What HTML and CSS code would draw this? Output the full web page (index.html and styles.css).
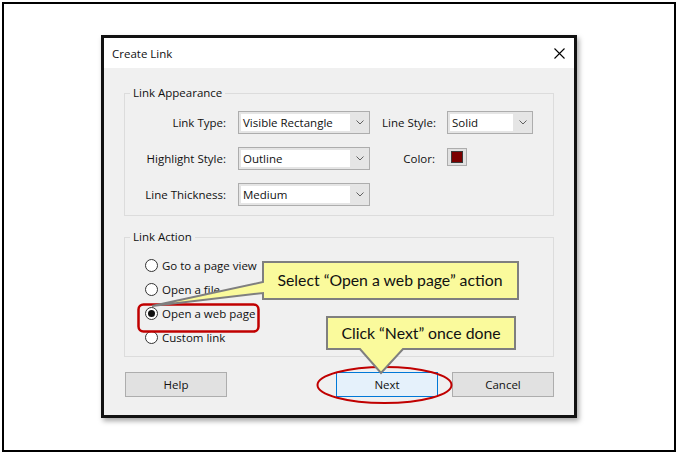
FILE: index.html
```html
<!DOCTYPE html>
<html lang="en">
<head>
    <meta charset="UTF-8">
    <title>Create Link</title>
    <link rel="stylesheet" href="styles.css">
</head>
<body>
    <div class="frame">
        <div class="dialog">
            <div class="titlebar">
                <span>Create Link</span>
                <svg class="close" width="11" height="11" viewBox="0 0 11 11">
                    <path d="M0.5 0.5 L10.5 10.5 M10.5 0.5 L0.5 10.5" stroke="#000" stroke-width="1.1" fill="none"/>
                </svg>
            </div>

            <div class="dialog-body">
                <fieldset class="group appearance">
                    <legend>Link Appearance</legend>
                    <div class="form-grid">
                        <label>Link Type:</label>
                        <div class="select">
                            <span class="value">Visible Rectangle</span>
                            <span class="arrow"><svg width="8" height="5" viewBox="0 0 8 5"><path d="M0.5 0.5 L4 4 L7.5 0.5" stroke="#606060" fill="none"/></svg></span>
                        </div>
                        <label>Line Style:</label>
                        <div class="select">
                            <span class="value">Solid</span>
                            <span class="arrow"><svg width="8" height="5" viewBox="0 0 8 5"><path d="M0.5 0.5 L4 4 L7.5 0.5" stroke="#606060" fill="none"/></svg></span>
                        </div>

                        <label>Highlight Style:</label>
                        <div class="select">
                            <span class="value">Outline</span>
                            <span class="arrow"><svg width="8" height="5" viewBox="0 0 8 5"><path d="M0.5 0.5 L4 4 L7.5 0.5" stroke="#606060" fill="none"/></svg></span>
                        </div>
                        <label>Color:</label>
                        <div class="swatch"><span></span></div>

                        <label>Line Thickness:</label>
                        <div class="select">
                            <span class="value">Medium</span>
                            <span class="arrow"><svg width="8" height="5" viewBox="0 0 8 5"><path d="M0.5 0.5 L4 4 L7.5 0.5" stroke="#606060" fill="none"/></svg></span>
                        </div>
                    </div>
                </fieldset>

                <fieldset class="group action">
                    <legend>Link Action</legend>
                    <div class="radio"><span class="dot"></span>Go to a page view</div>
                    <div class="radio"><span class="dot"></span>Open a file</div>
                    <div class="radio checked"><span class="dot"></span>Open a web page</div>
                    <div class="radio"><span class="dot"></span>Custom link</div>
                </fieldset>

                <div class="buttons">
                    <button class="btn">Help</button>
                    <span class="spacer"></span>
                    <button class="btn primary">Next</button>
                    <button class="btn">Cancel</button>
                </div>
            </div>
        </div>
    </div>

    <!-- annotation layer -->
    <svg class="notes" width="678" height="455" viewBox="0 0 678 455">
        <rect x="138.5" y="304.5" width="120" height="27" rx="5" fill="none" stroke="#c00000" stroke-width="2.5"/>
        <ellipse cx="384.5" cy="385" rx="67" ry="18" fill="none" stroke="#c00000" stroke-width="2"/>

        <path d="M263 262 H518 V299 H263 V293 L152 306 L263 282 Z" fill="#fafa9c" stroke="#7f7f7f" stroke-width="2"/>
        <text x="390" y="286" class="note-text">Select “Open a web page” action</text>

        <path d="M327 317 H515 V349 H403 L381 373 L360 349 H327 Z" fill="#fafa9c" stroke="#7f7f7f" stroke-width="2"/>
        <text x="421" y="339" class="note-text">Click “Next” once done</text>
    </svg>
</body>
</html>
```

FILE: styles.css
```css
* {
    margin: 0;
    padding: 0;
    box-sizing: border-box;
}

body {
    position: relative;
    width: 678px;
    height: 455px;
    background: white;
    font-family: 'Segoe UI', 'Open Sans', sans-serif;
    font-size: 11.5px;
    color: #111;
}

.frame {
    margin: 2px 0 0 2px;
    width: 674px;
    height: 450px;
    border: 2px solid #000;
    padding: 31px 0 0 97px;
}

.dialog {
    width: 476px;
    height: 383px;
    border: 3px solid #111;
    background: #f0f0f0;
    box-shadow: 2px 3px 5px rgba(0,0,0,0.35);
}

.titlebar {
    height: 30px;
    background: white;
    display: flex;
    align-items: center;
    justify-content: space-between;
    padding: 0 9px 0 8px;
}

.dialog-body {
    padding: 17px 20px 0 20px;
}

.group {
    border: 1px solid #dcdcdc;
    padding: 0;
}

.group legend {
    margin-left: 5px;
    padding: 0 3px;
    line-height: 16px;
}

.appearance {
    padding: 10px 0 9px 0;
}

.form-grid {
    display: grid;
    grid-template-columns: 101px 132px 53px 86px;
    grid-auto-rows: 23px;
    column-gap: 12px;
    row-gap: 13px;
    align-items: center;
}

.form-grid label {
    text-align: right;
    white-space: nowrap;
}

.select {
    display: flex;
    height: 23px;
    border: 1px solid #adadad;
    background: #e5e5e5;
}

.select .value {
    flex: 1;
    margin: 2px 0 2px 2px;
    padding-left: 2px;
    background: white;
    line-height: 17px;
}

.select .arrow {
    width: 19px;
    display: flex;
    align-items: center;
    justify-content: center;
}

.swatch {
    align-self: start;
    margin-top: 1px;
    width: 20px;
    height: 18px;
    border: 1px solid #adadad;
    background: #e1e1e1;
    padding: 2px 3px;
}

.swatch span {
    display: block;
    width: 12px;
    height: 12px;
    background: #7a0000;
    border: 1px solid #3a3a3a;
}

.action {
    margin-top: 13px;
    padding: 8px 0 7px 0;
}

.radio {
    height: 24px;
    display: flex;
    align-items: center;
    gap: 4px;
    padding-left: 20px;
}

.dot {
    width: 13px;
    height: 13px;
    border: 1px solid #333;
    border-radius: 50%;
    background: white;
    display: flex;
    align-items: center;
    justify-content: center;
}

.radio.checked .dot::after {
    content: "";
    width: 7px;
    height: 7px;
    border-radius: 50%;
    background: #111;
}

.buttons {
    display: flex;
    gap: 14px;
    margin-top: 15px;
    padding-left: 1px;
}

.spacer {
    flex: 1;
}

.btn {
    width: 102px;
    height: 25px;
    border: 1px solid #adadad;
    background: #e1e1e1;
    font-family: inherit;
    font-size: 11.5px;
    color: #111;
}

.btn.primary {
    background: #e5f1fb;
    border-color: #0078d7;
}

.notes {
    position: absolute;
    left: 0;
    top: 0;
}

.note-text {
    font-family: Lato, 'Open Sans', sans-serif;
    font-size: 15.8px;
    fill: #111;
    text-anchor: middle;
}
```
